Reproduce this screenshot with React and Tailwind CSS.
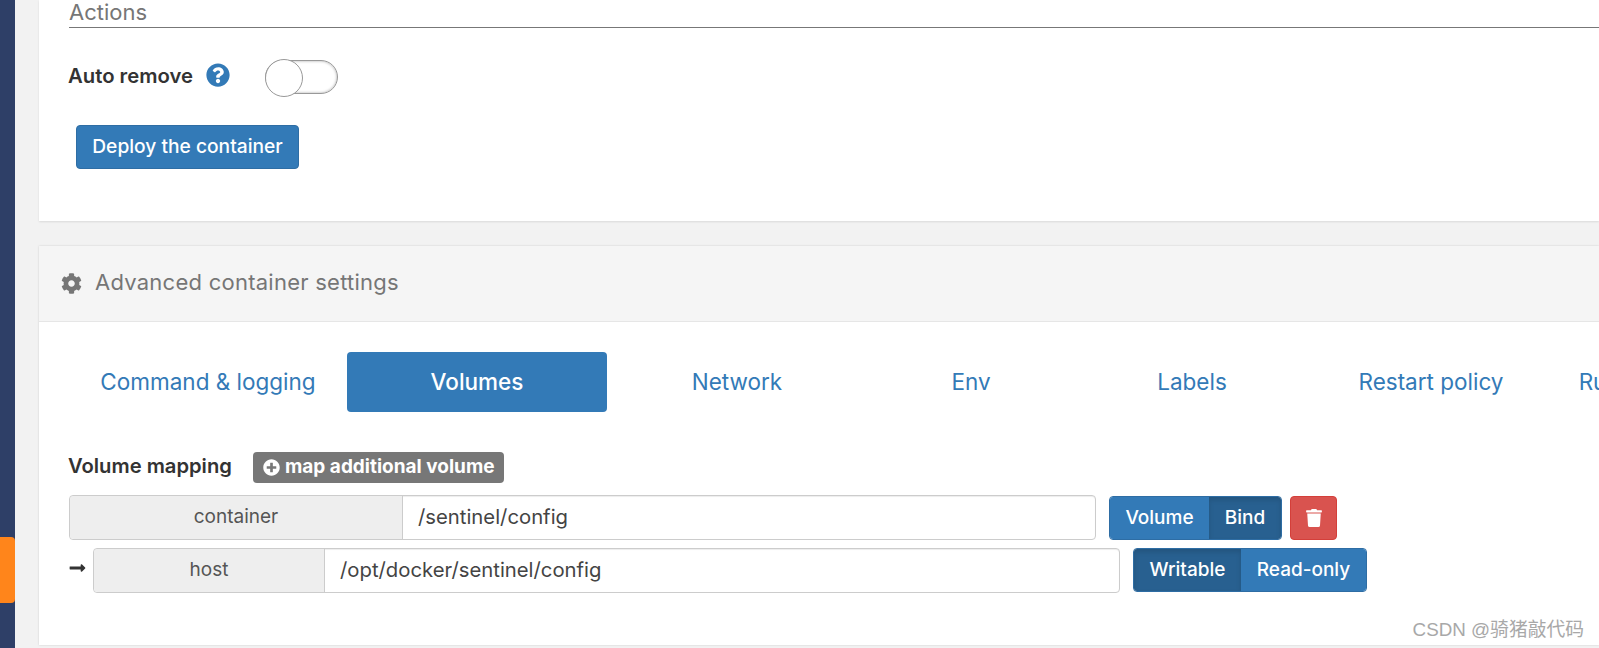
import React from 'react';
import { FaCog, FaQuestionCircle, FaPlusCircle, FaTrash, FaLongArrowAltRight } from 'react-icons/fa';

const tabs = [
  { label: 'Command & logging', width: 'w-[278px]' },
  { label: 'Volumes', width: 'w-[260px]', active: true },
  { label: 'Network', width: 'w-[260px]' },
  { label: 'Env', width: 'w-[208px]' },
  { label: 'Labels', width: 'w-[234px]' },
  { label: 'Restart policy', width: 'w-[244px]' },
  { label: 'Runtime & resources', width: 'w-[271px]' },
];

function InputRow({ label, value, groupWidth, addonWidth }) {
  return (
    <div className={`flex h-[45px] rounded border border-[#cccccc] shadow-[inset_0_1px_1px_rgba(0,0,0,0.075)] ${groupWidth}`}>
      <div className={`flex items-center justify-center rounded-l bg-[#eeeeee] border-r border-[#cccccc] text-[#555555] text-[19px] ${addonWidth}`}>
        {label}
      </div>
      <div className="flex-1 flex items-center pl-[15px] text-[#444444] text-[20.3px]">{value}</div>
    </div>
  );
}

function Segmented({ left, right, activeSide, leftWidth, rightWidth }) {
  const base = 'flex items-center justify-center text-white text-[19px] font-medium';
  const on = 'bg-[#286090] shadow-[inset_0_3px_5px_rgba(0,0,0,0.125)]';
  const off = 'bg-[#337ab7]';
  return (
    <div className="flex h-[44px] rounded overflow-hidden border border-[#2e6da4]">
      <div className={`${base} ${leftWidth} ${activeSide === 'left' ? on : off}`}>{left}</div>
      <div className={`${base} ${rightWidth} ${activeSide === 'right' ? on : off}`}>{right}</div>
    </div>
  );
}

export default function App() {
  return (
    <div className="flex h-[648px] overflow-hidden bg-[#f2f2f2] font-['Inter',sans-serif]">
      <div className="w-[15px] shrink-0 bg-[#2e3f67] pt-[537px]">
        <div className="h-[66px] rounded-r-sm bg-[#ff851b]" />
      </div>

      <div className="flex-1 min-w-0 pl-[24px] flex flex-col">
        <div className="h-[221px] bg-white shadow-[0_1px_2px_rgba(0,0,0,0.1)] pl-[30px]">
          <div className="h-[28px] border-b border-[#777777] text-[#767676] text-[22px] leading-[24px]">Actions</div>

          <div className="flex items-center h-[36px] mt-[31px]">
            <span className="w-[137px] -ml-px mr-px -mt-[2px] text-[#333333] text-[20.3px] font-semibold whitespace-nowrap">Auto remove</span>
            <FaQuestionCircle className="w-[24px] h-[24px] -mt-[5px] text-[#337ab7]" />
            <div className="relative ml-[35px] w-[73px] h-[34px] rounded-full border border-[#999999] shadow-[inset_0_0_3px_rgba(0,0,0,0.35)]">
              <div className="absolute -left-px -top-px w-[38px] h-[38px] -mt-[1px] rounded-full bg-white border border-[#999999]" />
            </div>
          </div>

          <button className="block ml-[7px] mt-[30px] w-[223px] h-[44px] pb-[2px] rounded bg-[#337ab7] border border-[#2e6da4] text-white text-[19.2px] font-medium whitespace-nowrap">
            Deploy the container
          </button>
        </div>

        <div className="mt-[25px] flex-1 bg-white shadow-[0_0_2px_rgba(0,0,0,0.15)] mb-[3px]">
          <div className="h-[76px] flex items-center bg-[#f5f5f5] border-b border-[#e6e6e6] pl-[22px] text-[#767676]">
            <FaCog className="w-[21px] h-[21px] -mt-px" />
            <span className="ml-[13px] -mt-[2px] text-[22px] tracking-[0.25px]">Advanced container settings</span>
          </div>

          <div className="flex mt-[30px] pl-[30px] overflow-hidden">
            {tabs.map((tab) => (
              <div
                key={tab.label}
                className={`shrink-0 h-[60px] flex items-center justify-center rounded text-[22.5px] whitespace-nowrap ${tab.width} ${tab.active ? 'bg-[#337ab7] text-white font-medium' : 'text-[#337ab7]'}`}
              >
                {tab.label}
              </div>
            ))}
          </div>

          <div className="flex items-center mt-[40px] pl-[30px]">
            <span className="w-[184px] -ml-px mr-px -mt-[3px] text-[#333333] text-[20.2px] font-semibold whitespace-nowrap">Volume mapping</span>
            <span className="flex items-center w-[251px] h-[31px] pl-[10px] rounded bg-[#777777] text-white text-[19px] font-bold whitespace-nowrap">
              <FaPlusCircle className="w-[17px] h-[17px] mr-[5px] -mt-px" />
              <span className="-mt-px">map additional volume</span>
            </span>
          </div>

          <div className="flex items-start mt-[12px] pl-[30px]">
            <InputRow label="container" value="/sentinel/config" groupWidth="w-[1027px]" addonWidth="w-[333px]" />
            <div className="ml-[13px] mt-px">
              <Segmented left="Volume" right="Bind" activeSide="right" leftWidth="w-[99px]" rightWidth="w-[72px]" />
            </div>
            <button className="flex items-center justify-center ml-[8px] mt-px w-[47px] h-[44px] rounded bg-[#d9534f] border border-[#d43f3a] text-white">
              <FaTrash className="w-[16px] h-[18px]" />
            </button>
          </div>

          <div className="flex items-start mt-[8px] pl-[29px]">
            <FaLongArrowAltRight className="w-[21px] h-[18px] -ml-px mt-[11px] text-[#333333]" />
            <div className="ml-[5px]">
              <InputRow label="host" value="/opt/docker/sentinel/config" groupWidth="w-[1027px]" addonWidth="w-[231px]" />
            </div>
            <div className="ml-[13px]">
              <Segmented left="Writable" right="Read-only" activeSide="left" leftWidth="w-[107px]" rightWidth="w-[125px]" />
            </div>
          </div>

          <div className="flex justify-end pr-[15px] mt-[27px] text-[#a8a8a8] text-[18.8px] leading-[20px] font-['Liberation_Sans','Noto_Sans_CJK_SC',sans-serif]">
            CSDN @骑猪敲代码
          </div>
        </div>
      </div>
    </div>
  );
}
